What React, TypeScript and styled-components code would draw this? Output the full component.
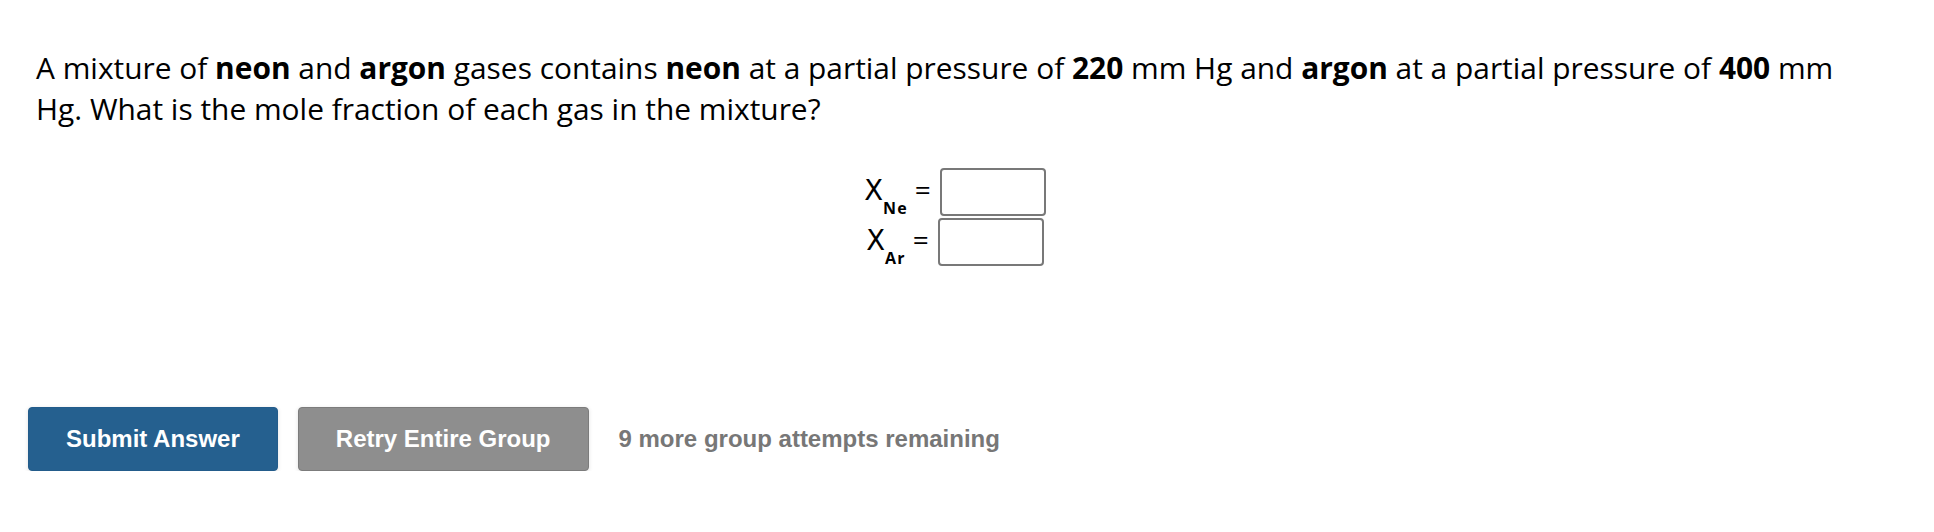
import React from 'react';
import styled, { createGlobalStyle } from 'styled-components';

const GlobalStyle = createGlobalStyle`
	body {
		margin: 0;
		background: #ffffff;
	}
`;

const Page = styled.div`
	width: 1838px;
	padding: 47px 0 0 36px;
`;

const Question = styled.p`
	margin: 0;
	font-family: 'Open Sans', 'Noto Sans', sans-serif;
	font-size: 29.9px;
	line-height: 41px;
	color: #000000;
	b {
		font-weight: 700;
	}
`;

const Equations = styled.div`
	margin-top: 39px;
	display: flex;
	flex-direction: column;
	align-items: center;
	gap: 2px;
`;

const EqRow = styled.div`
	display: flex;
	align-items: flex-start;
	height: 48px;
`;

// the X in the reference is wider than Open Sans draws it
const Variable = styled.div`
	font-family: 'DejaVu Sans', 'Open Sans', sans-serif;
	font-size: 27.5px;
	line-height: 45px;
	color: #000000;
	white-space: nowrap;
`;

const Sub = styled.span`
	font-family: 'Open Sans', 'Noto Sans', sans-serif;
	font-size: 16px;
	font-weight: 700;
	line-height: 0;
	letter-spacing: 1.2px;
	vertical-align: -14px;
`;

const Equals = styled.div`
	font-family: 'Open Sans', 'Noto Sans', sans-serif;
	font-size: 28px;
	line-height: 42px;
	margin: 0 9px 0 7px;
`;

const AnswerBox = styled.input`
	box-sizing: border-box;
	width: 106px;
	height: 48px;
	border: 2px solid #787878;
	border-radius: 4px;
	background: #ffffff;
	padding: 0 8px;
	font-family: 'Open Sans', 'Noto Sans', sans-serif;
	font-size: 24px;
	outline: none;
`;

const Actions = styled.div`
	margin: 141px 0 0 -8px;
	display: flex;
	align-items: center;
	gap: 20px;
`;

const Button = styled.button<{ $variant: 'primary' | 'muted' }>`
	height: 64px;
	padding: 0 37px;
	border-radius: 4px;
	border: 1px solid ${(p) => (p.$variant === 'primary' ? '#235c8b' : '#7c7c7c')};
	background: ${(p) => (p.$variant === 'primary' ? '#25608f' : '#8e8e8e')};
	box-shadow: 0 1px 4px rgba(0, 0, 0, 0.12);
	color: #ffffff;
	font-family: 'Liberation Sans', Arial, sans-serif;
	font-size: 24px;
	font-weight: 700;
	cursor: pointer;
`;

const Attempts = styled.span`
	margin-left: 10px;
	font-family: 'Liberation Sans', Arial, sans-serif;
	font-size: 24px;
	font-weight: 700;
	color: #777777;
`;

const App = () => {
	return (
		<Page>
			<GlobalStyle />
			<Question>
				A mixture of <b>neon</b> and <b>argon</b> gases contains <b>neon</b> at a partial pressure of{' '}
				<b>220</b> mm Hg and <b>argon</b> at a partial pressure of <b>400</b> mm Hg. What is the mole
				fraction of each gas in the mixture?
			</Question>
			<Equations>
				<EqRow>
					<Variable>
						X<Sub>Ne</Sub>
					</Variable>
					<Equals>=</Equals>
					<AnswerBox type="text" />
				</EqRow>
				<EqRow>
					<Variable>
						X<Sub>Ar</Sub>
					</Variable>
					<Equals>=</Equals>
					<AnswerBox type="text" />
				</EqRow>
			</Equations>
			<Actions>
				<Button $variant="primary">Submit Answer</Button>
				<Button $variant="muted">Retry Entire Group</Button>
				<Attempts>9 more group attempts remaining</Attempts>
			</Actions>
		</Page>
	);
};

export default App;
